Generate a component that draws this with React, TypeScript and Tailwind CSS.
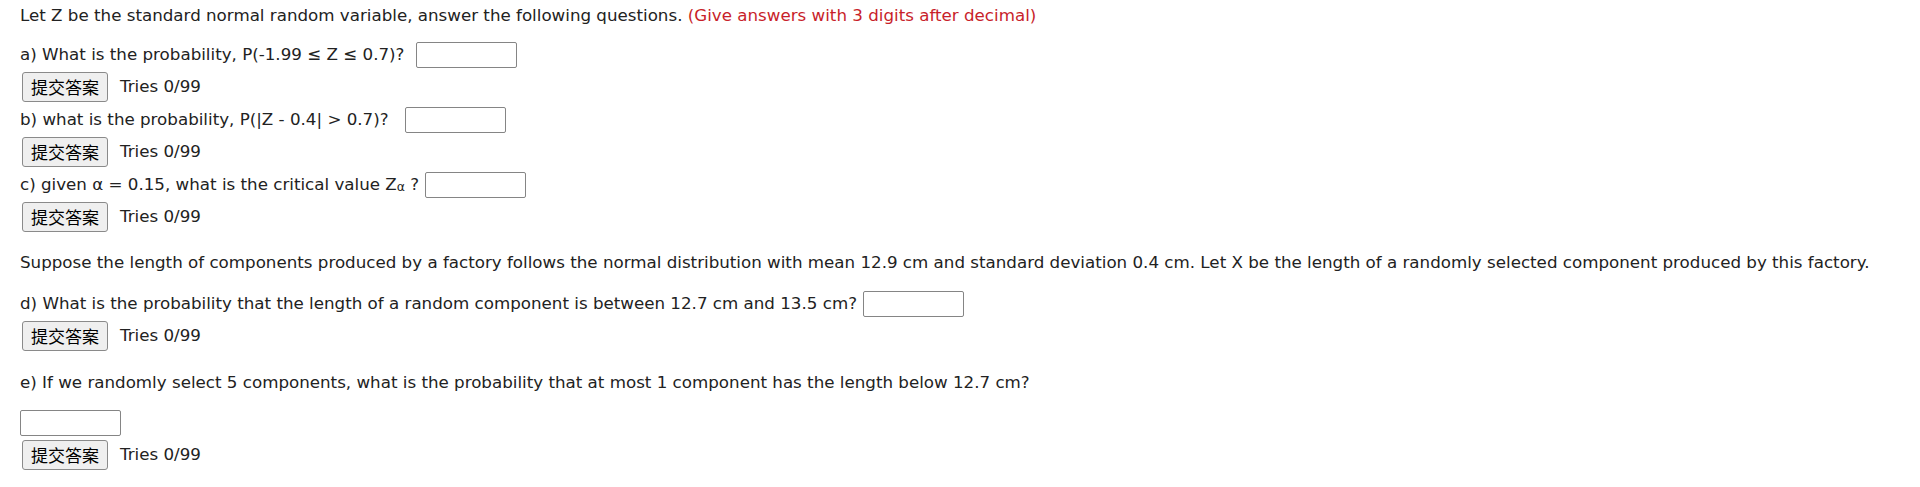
import React from 'react'

interface PartProps {
  children: React.ReactNode
  gap?: string
}

function Answer(): React.ReactElement {
  return (
    <input
      type="text"
      className="w-[101px] h-[26px] border border-[#858585] rounded-[2px] bg-white px-1 shrink-0"
    />
  )
}

function Submit(): React.ReactElement {
  return (
    <div className="flex items-center h-[30px] mt-[4px]">
      <button className="w-[86px] h-[30px] ml-[2px] bg-[#efefef] border border-[#8a8a8a] rounded-[3px] text-[17px] text-black flex items-center justify-center font-['Noto_Sans_CJK_SC',sans-serif]">
        提交答案
      </button>
      <span className="ml-[12px]">Tries 0/99</span>
    </div>
  )
}

function Question({ children, gap = 'gap-[6px]' }: PartProps): React.ReactElement {
  return (
    <div className={`flex items-center h-[26px] whitespace-nowrap ${gap}`}>
      {children}
    </div>
  )
}

export default function App(): React.ReactElement {
  return (
    <div className="bg-white w-[1920px] h-[487px] px-[20px] text-[16.7px] text-[#222] font-['DejaVu_Sans','Verdana',sans-serif]">
      <div className="flex items-center h-[32px] whitespace-nowrap">
        Let Z be the standard normal random variable, answer the following questions.&nbsp;
        <span className="text-[#c81e2a]">(Give answers with 3 digits after decimal)</span>
      </div>

      <div className="mt-[10px]">
        <Question gap="gap-[12px]">
          <span>a) What is the probability, P(-1.99 ≤ Z ≤ 0.7)?</span>
          <Answer />
        </Question>
      </div>
      <Submit />

      <div className="mt-[5px]">
        <Question gap="gap-[16px]">
          <span>b) what is the probability, P(|Z - 0.4| &gt; 0.7)?</span>
          <Answer />
        </Question>
      </div>
      <Submit />

      <div className="mt-[5px]">
        <Question>
          <span>
            c) given α = 0.15, what is the critical value Z
            <sub className="text-[12.5px] relative top-[1px]">α</sub> ?
          </span>
          <Answer />
        </Question>
      </div>
      <Submit />

      <div className="flex items-center h-[32px] mt-[15px] whitespace-nowrap">
        Suppose the length of components produced by a factory follows the normal distribution with mean 12.9 cm and standard deviation 0.4 cm. Let X be the length of a randomly selected component produced by this factory.
      </div>

      <div className="mt-[12px]">
        <Question>
          <span>d) What is the probability that the length of a random component is between 12.7 cm and 13.5 cm?</span>
          <Answer />
        </Question>
      </div>
      <Submit />

      <div className="flex items-center h-[32px] mt-[16px] whitespace-nowrap">
        e) If we randomly select 5 components, what is the probability that at most 1 component has the length below 12.7 cm?
      </div>
      <div className="mt-[11px] h-[26px] flex">
        <Answer />
      </div>
      <Submit />
    </div>
  )
}
